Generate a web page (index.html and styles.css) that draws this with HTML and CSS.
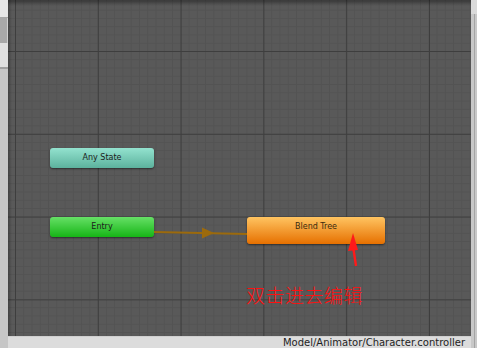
FILE: index.html
```html
<!DOCTYPE html>
<html lang="zh-cn">
<head>
  <meta charset="UTF-8">
  <title>Animator</title>
  <link rel="stylesheet" href="styles.css">
</head>
<body>

<div class="window">
  <div class="side-left">
    <div class="tab-top"></div>
    <div class="tab-mid"></div>
    <div class="tab-low"></div>
  </div>

  <div class="main">
    <div class="graph">
      <div class="node node-any">Any State</div>
      <div class="node node-entry">Entry</div>
      <div class="node node-blend">Blend Tree</div>

      <svg class="links" width="463" height="337" viewBox="0 0 463 337">
        <line x1="146" y1="232" x2="239" y2="234" stroke="#9c6a0c" stroke-width="2"/>
        <polygon points="194,227.5 206,233 194,238.5" fill="#9c6a0c"/>
        <line x1="348" y1="266" x2="345" y2="246" stroke="#ff1a1a" stroke-width="2.4"/>
        <polygon points="345,233 340,251 350,250" fill="#ff1a1a"/>
      </svg>

      <div class="note">双击进去编辑</div>
    </div>
    <div class="status">Model/Animator/Character.controller</div>
  </div>

  <div class="side-right">
    <div class="side-right-top"></div>
    <div class="side-right-line"></div>
  </div>
</div>

</body>
</html>
```

FILE: styles.css
```css
body {
  margin: 0;
  padding: 0;
  font-family: "DejaVu Sans", Verdana, sans-serif;
  background-color: #c6c6c6;
}
.window {
  display: flex;
  width: 477px;
  height: 348px;
  overflow: hidden;
}
.side-left {
  width: 8px;
  background-color: #c6c6c6;
  display: flex;
  flex-direction: column;
}
.tab-top {
  height: 17px;
  background-color: #e6e6e6;
  border-bottom: 1px solid #a6a6a6;
}
.tab-mid {
  height: 25px;
  background-color: #a8a8a8;
  border-right: 1px solid #cfcfcf;
}
.tab-low {
  height: 24px;
  background-color: #e0e0e0;
  border-bottom: 2px solid #a0a0a0;
}
.main {
  flex: 1;
  display: flex;
  flex-direction: column;
}
.graph {
  position: relative;
  height: 336px;
  background-color: #595959;
  background-image:
    linear-gradient(to bottom, rgba(0, 0, 0, 0.35), rgba(0, 0, 0, 0) 6px),
    linear-gradient(to right, rgba(0, 0, 0, 0.25), rgba(0, 0, 0, 0) 4px),
    linear-gradient(to right, #3e3e3e 1px, transparent 1px),
    linear-gradient(to bottom, #3e3e3e 1px, transparent 1px),
    linear-gradient(to right, #535353 1px, transparent 1px),
    linear-gradient(to bottom, #535353 1px, transparent 1px);
  background-size:
    100% 100%,
    100% 100%,
    82.8px 82.8px,
    82.8px 82.8px,
    8.28px 8.28px,
    8.28px 8.28px;
  background-position:
    0 0,
    0 0,
    7px 51px,
    7px 51px,
    7px 51px,
    7px 51px;
  overflow: hidden;
}
.node {
  position: absolute;
  left: 42px;
  width: 104px;
  height: 20px;
  line-height: 20px;
  border-radius: 3px;
  font-size: 8px;
  text-align: center;
  color: #1c1c1c;
  box-shadow: 0 1px 2px rgba(0, 0, 0, 0.5);
}
.node-any {
  top: 148px;
  background: linear-gradient(to bottom, #93e2cf, #5cb29d);
}
.node-entry {
  top: 217px;
  background: linear-gradient(to bottom, #66e066, #16b516);
}
.node-blend {
  left: 239px;
  top: 217px;
  width: 138px;
  height: 27px;
  line-height: 20px;
  background: linear-gradient(to bottom, #ffc461, #e67000);
  color: #3a2a10;
}
.links {
  position: absolute;
  left: 0;
  top: 0;
}
.note {
  position: absolute;
  left: 238px;
  top: 281px;
  font-family: "Noto Sans CJK SC", sans-serif;
  font-weight: 300;
  font-size: 19px;
  letter-spacing: 0.5px;
  color: #ff1010;
}
.status {
  flex: 1;
  background-color: #dcdcdc;
  border-top: 1px solid #cfcfcf;
  font-family: "DejaVu Sans", Verdana, sans-serif;
  font-size: 10px;
  text-align: right;
  padding: 0 6px 0 0;
  line-height: 11px;
  color: #1e1e1e;
  overflow: hidden;
}
.side-right {
  width: 6px;
  background-color: #c8c8c8;
  position: relative;
}
.side-right-top {
  height: 14px;
  background-color: #dadada;
}
.side-right-line {
  position: absolute;
  left: 3px;
  top: 14px;
  bottom: 0;
  width: 1px;
  background-color: #a4a4a4;
}
```
